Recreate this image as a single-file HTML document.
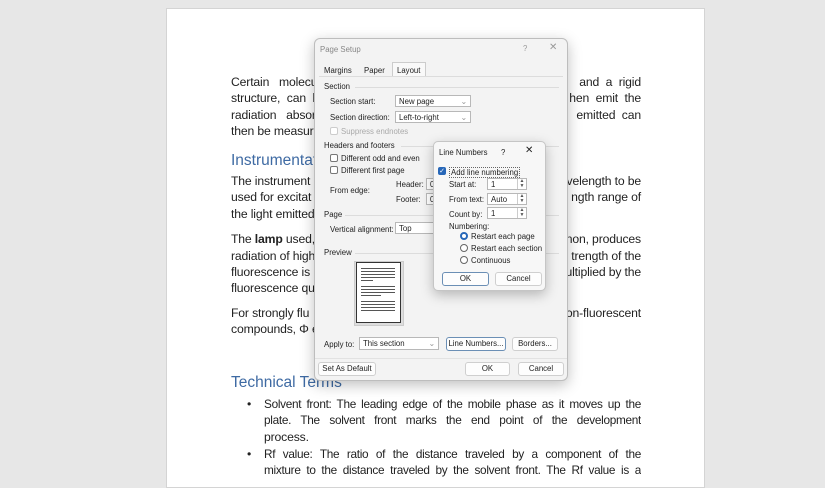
<!DOCTYPE html>
<html><head><meta charset="utf-8"><style>
*{margin:0;padding:0;box-sizing:border-box}
body{width:825px;height:473px;overflow:hidden;background:#e7e7e7;position:relative;font-family:"Liberation Sans",sans-serif}
.page{position:absolute;left:166px;top:8px;width:539px;height:480px;background:#fff;border:1px solid #d4d4d4}
.t{position:absolute;font-size:12.2px;color:#222;white-space:nowrap;line-height:16px;letter-spacing:-0.15px}
.r{text-align:right}
.j{text-align:justify;text-align-last:justify;white-space:normal;font-size:11.8px;letter-spacing:-0.3px;height:16px;overflow:hidden}
.h{position:absolute;font-size:15.5px;color:#3e6aa3;white-space:nowrap}
.dlg{position:absolute;left:314px;top:38px;width:254px;height:343px;background:#f3f3f3;border:1px solid #bdbdbd;border-radius:6px;box-shadow:0 4px 14px rgba(0,0,0,.25);font-size:7.8px;color:#222}
.a{position:absolute;white-space:nowrap}
.box{position:absolute;background:#fff;border:1px solid #b8b8b8;height:12px;font-size:7.8px;padding:1px 3px}
.chk{position:absolute;width:8px;height:8px;border:1px solid #777;border-radius:2px;background:#fff}
.btn{position:absolute;background:#fdfdfd;border:1px solid #cfcfcf;border-radius:3px;height:14px;text-align:center;font-size:7.8px;line-height:12px}
.line{position:absolute;height:1px;background:#dcdcdc}
.ln{position:absolute;left:433px;top:141px;width:113px;height:150px;background:#f7f7f7;border:1px solid #c5c5c5;border-radius:5px;box-shadow:0 4px 12px rgba(0,0,0,.25);font-size:7.8px;color:#222}
.rad{position:absolute;width:8px;height:8px;border:1px solid #666;border-radius:50%;background:#fff}
.spin{position:absolute;right:0;top:0;width:9px;height:10px;border-left:1px solid #ccc;font-size:5px;line-height:5px;text-align:center;color:#555}
</style></head><body>
<div class="page"></div>
<div class="t" style="left:231px;top:74px">Certain&nbsp;&nbsp;&nbsp;molecu</div>
<div class="t r" style="right:184px;top:74px">and&nbsp;&nbsp;a&nbsp;&nbsp;rigid</div>
<div class="t" style="left:231px;top:90px">structure,&nbsp;&nbsp;can&nbsp;&nbsp;l</div>
<div class="t r" style="right:184px;top:90px">hen&nbsp;&nbsp;emit&nbsp;&nbsp;the</div>
<div class="t" style="left:231px;top:107px">radiation&nbsp;&nbsp;&nbsp;absor</div>
<div class="t r" style="right:184px;top:107px">emitted&nbsp;&nbsp;can</div>
<div class="t" style="left:231px;top:123px">then be measure</div>
<div class="h" style="left:231px;top:152px">Instrumentati</div>
<div class="t" style="left:231px;top:173px">The instrument</div>
<div class="t r" style="right:184px;top:173px">velength to be</div>
<div class="t" style="left:231px;top:189px">used for excitat</div>
<div class="t r" style="right:184px;top:189px">ngth range of</div>
<div class="t" style="left:231px;top:206px">the light emitted</div>
<div class="t" style="left:231px;top:231px">The <b>lamp</b> used,</div>
<div class="t r" style="right:184px;top:231px">non, produces</div>
<div class="t" style="left:231px;top:248px">radiation of high</div>
<div class="t r" style="right:184px;top:248px">trength of the</div>
<div class="t" style="left:231px;top:264px">fluorescence is</div>
<div class="t r" style="right:184px;top:264px">ultiplied by the</div>
<div class="t" style="left:231px;top:280px">fluorescence qua</div>
<div class="t" style="left:231px;top:305px">For strongly flu</div>
<div class="t r" style="right:184px;top:305px">on-fluorescent</div>
<div class="t" style="left:231px;top:321px">compounds, Φ e</div>
<div class="h" style="left:231px;top:374px">Technical Terms</div>
<div class="t" style="left:247px;top:396px">•</div>
<div class="t j" style="left:264px;top:396px;width:377px">Solvent front: The leading edge of the mobile phase as it moves up the</div>
<div class="t j" style="left:264px;top:412px;width:377px">plate. The solvent front marks the end point of the development</div>
<div class="t" style="left:264px;top:429px">process.</div>
<div class="t" style="left:247px;top:446px">•</div>
<div class="t j" style="left:264px;top:446px;width:377px">Rf value: The ratio of the distance traveled by a component of the</div>
<div class="t j" style="left:264px;top:462px;width:377px">mixture to the distance traveled by the solvent front. The Rf value is a</div>

<div class="dlg">
<div class="a" style="left:5px;top:6px;color:#888">Page Setup</div>
<div class="a" style="left:208px;top:5px;color:#999">?</div>
<div class="a" style="left:234px;top:3px;color:#999;font-size:10px">✕</div>
<div class="a" style="left:9px;top:27px">Margins</div>
<div class="a" style="left:49px;top:27px">Paper</div>
<div style="position:absolute;left:77px;top:23px;width:34px;height:15px;background:#f9f9f9;border:1px solid #ccc;border-bottom:none"></div>
<div class="a" style="left:82px;top:27px">Layout</div>
<div class="line" style="left:4px;right:4px;top:37px"></div>
<div class="a" style="left:9px;top:43px">Section</div><div class="line" style="left:40px;right:8px;top:48px"></div>
<div class="a" style="left:15px;top:58px">Section start:</div>
<div class="box" style="left:80px;top:56px;width:76px">New page<span style="float:right;color:#999">⌄</span></div>
<div class="a" style="left:15px;top:74px">Section direction:</div>
<div class="box" style="left:80px;top:72px;width:76px">Left-to-right<span style="float:right;color:#999">⌄</span></div>
<div class="chk" style="left:15px;top:88px;border-color:#ccc"></div><div class="a" style="left:26px;top:88px;color:#aaa">Suppress endnotes</div>
<div class="a" style="left:9px;top:102px">Headers and footers</div><div class="line" style="left:86px;right:8px;top:107px"></div>
<div class="chk" style="left:15px;top:115px"></div><div class="a" style="left:26px;top:115px">Different odd and even</div>
<div class="chk" style="left:15px;top:127px"></div><div class="a" style="left:26px;top:127px">Different first page</div>
<div class="a" style="left:15px;top:147px">From edge:</div>
<div class="a" style="left:81px;top:141px">Header:</div><div class="box" style="left:111px;top:139px;width:10px">0.</div>
<div class="a" style="left:81px;top:156px">Footer:</div><div class="box" style="left:111px;top:154px;width:10px">0.</div>
<div class="a" style="left:9px;top:171px">Page</div><div class="line" style="left:30px;right:8px;top:176px"></div>
<div class="a" style="left:15px;top:186px">Vertical alignment:</div>
<div class="box" style="left:80px;top:183px;width:40px">Top</div>
<div class="a" style="left:9px;top:209px">Preview</div><div class="line" style="left:40px;right:8px;top:214px"></div>
<div style="position:absolute;left:39px;top:222px;width:50px;height:65px;background:#ddd;border:1px solid #ccc"></div>
<div style="position:absolute;left:41px;top:223px;width:45px;height:61px;background:#fff;border:1.5px solid #333"></div>
<svg style="position:absolute;left:46px;top:229px" width="36" height="50"><g stroke="#555" stroke-width="1"><path d="M0 .5H34M0 3.5H34M0 6.5H34M0 9.5H34M0 12.5H12M0 18.5H34M0 21.5H34M0 24.5H34M0 27.5H20M0 33.5H34M0 36.5H34M0 39.5H34M0 42.5H34"/></g></svg>
<div class="a" style="left:9px;top:301px">Apply to:</div>
<div class="box" style="left:44px;top:298px;width:80px;height:13px">This section<span style="float:right;color:#999">⌄</span></div>
<div class="btn" style="left:131px;top:298px;width:60px;border-color:#6b8fb5">Line Numbers...</div>
<div class="btn" style="left:197px;top:298px;width:46px">Borders...</div>
<div class="line" style="left:0;right:0;top:319px;background:#e2e2e2"></div>
<div class="btn" style="left:3px;top:323px;width:58px">Set As Default</div>
<div class="btn" style="left:150px;top:323px;width:45px">OK</div>
<div class="btn" style="left:203px;top:323px;width:46px">Cancel</div>
</div>

<div class="ln">
<div class="a" style="left:5px;top:6px">Line Numbers</div>
<div class="a" style="left:67px;top:6px">?</div>
<div class="a" style="left:91px;top:3px;font-size:10px">✕</div>
<div class="chk" style="left:4px;top:25px;background:#2767b8;border-color:#2767b8;color:#fff;font-size:7px;line-height:7px;text-align:center">✓</div>
<div class="a" style="left:15px;top:25px;border:1px dotted #666;padding:0 1px">Add line numbering</div>
<div class="a" style="left:15px;top:38px">Start at:</div>
<div class="box" style="left:53px;top:36px;width:40px;height:12px">1<div class="spin">▲<br>▼</div></div>
<div class="a" style="left:15px;top:53px">From text:</div>
<div class="box" style="left:53px;top:51px;width:40px;height:12px">Auto<div class="spin">▲<br>▼</div></div>
<div class="a" style="left:15px;top:68px">Count by:</div>
<div class="box" style="left:53px;top:65px;width:40px;height:12px">1<div class="spin">▲<br>▼</div></div>
<div class="a" style="left:15px;top:80px">Numbering:</div>
<div class="rad" style="left:26px;top:90px;border:2.5px solid #2767b8"></div><div class="a" style="left:37px;top:90px">Restart each page</div>
<div class="rad" style="left:26px;top:102px"></div><div class="a" style="left:37px;top:102px">Restart each section</div>
<div class="rad" style="left:26px;top:114px"></div><div class="a" style="left:37px;top:114px">Continuous</div>
<div class="btn" style="left:8px;top:130px;width:47px;border-color:#6b8fb5">OK</div>
<div class="btn" style="left:61px;top:130px;width:47px">Cancel</div>
</div>
</body></html>
